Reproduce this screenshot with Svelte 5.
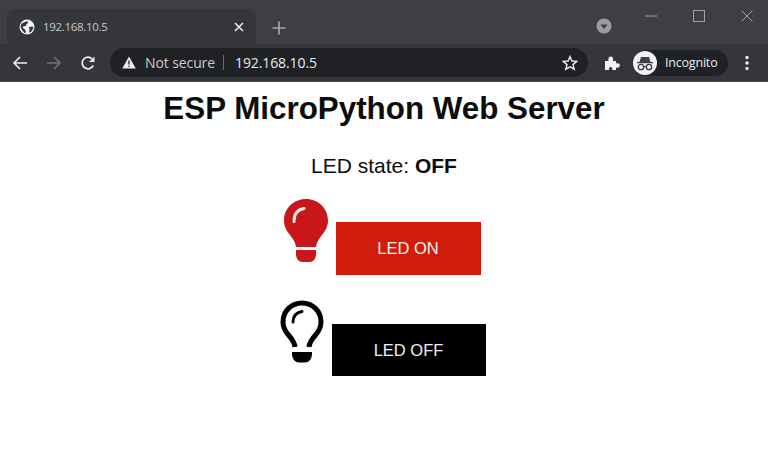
<script>
  const buttons = [
    { label: 'LED ON', cls: 'on' },
    { label: 'LED OFF', cls: 'off' }
  ];
</script>

<div class="page">
  <header class="chrome">
    <div class="tabstrip">
      <div class="tab">
        <svg class="globe" viewBox="0 0 16 16" width="16" height="16">
          <circle cx="8" cy="8" r="7.5" fill="#f1f3f4" />
          <path d="M2.5 4.5 L6 3 L8.5 2 L9 4 L7 5.5 L7.5 7 L5 7 L3.5 8.5 L6 10.5 L7 13.5 L5.5 14 L3 11 L1.5 8 Z M10 8 L13.5 7.5 L14.5 9 L12 13 L10 13.5 L10.5 11 Z" fill="#35363a" />
        </svg>
        <span class="tabtitle">192.168.10.5</span>
        <svg class="tabx" viewBox="0 0 10 10" width="10" height="10">
          <path d="M1 1 L9 9 M9 1 L1 9" stroke="#e8eaed" stroke-width="1.6" />
        </svg>
      </div>
      <svg class="plus" viewBox="0 0 14 14" width="14" height="14">
        <path d="M7 0.5 V13.5 M0.5 7 H13.5" stroke="#a5a7aa" stroke-width="1.7" />
      </svg>
      <svg class="tabsearch" viewBox="0 0 16 16" width="16" height="16">
        <circle cx="8" cy="8" r="7.5" fill="#9a9c9f" />
        <path d="M4.5 6.5 H11.5 L8 11 Z" fill="#3c3e41" />
      </svg>
      <div class="winctl">
        <svg viewBox="0 0 12 12" width="12" height="12"><path d="M0 6 H12" stroke="#9fa1a3" /></svg>
        <svg viewBox="0 0 12 12" width="12" height="12"><rect x="0.5" y="0.5" width="11" height="11" fill="none" stroke="#9fa1a3" /></svg>
        <svg viewBox="0 0 12 12" width="12" height="12"><path d="M0.5 0.5 L11.5 11.5 M11.5 0.5 L0.5 11.5" stroke="#9fa1a3" /></svg>
      </div>
    </div>
    <div class="toolbar">
      <svg class="nav" viewBox="0 0 16 16" width="16" height="16"><path d="M15 8 H2 M8 2 L2 8 L8 14" fill="none" stroke="#e8eaed" stroke-width="1.7" /></svg>
      <svg class="nav" viewBox="0 0 16 16" width="16" height="16"><path d="M1 8 H14 M8 2 L14 8 L8 14" fill="none" stroke="#6f7174" stroke-width="1.7" /></svg>
      <svg class="nav" viewBox="0 0 16 16" width="16" height="16"><path d="M13.2 10.5 A5.8 5.8 0 1 1 12.2 4" fill="none" stroke="#e8eaed" stroke-width="1.8" /><path d="M14.5 1.5 V7 H9 Z" fill="#e8eaed" /></svg>
      <div class="omnibox">
        <svg viewBox="0 0 14 13" width="14" height="13"><path d="M7 0.5 L13.8 12.5 H0.2 Z" fill="#e8eaed" /><path d="M7 4.5 V8.500 M7 9.700 V11" stroke="#202124" stroke-width="1.3" /></svg>
        <span class="notsecure">Not secure</span>
        <span class="sep"></span>
        <span class="url">192.168.10.5</span>
        <svg class="star" viewBox="0 0 16 16" width="16" height="16"><path d="M8 1.6 L9.9 6 L14.7 6.4 L11 9.6 L12.2 14.2 L8 11.8 L3.8 14.2 L5 9.6 L1.3 6.4 L6.1 6 Z" fill="none" stroke="#e8eaed" stroke-width="1.4" /></svg>
      </div>
      <svg class="ext" viewBox="0 0 16 16" width="16" height="16"><path d="M1 6 H4.5 C4 3 5 1.5 6.8 1.5 C8.6 1.5 9.5 3 9 6 H12 V8.5 C14.8 8 15.8 9 15.8 10.5 C15.8 12 14.8 13 12 12.5 V15 H8.2 C8.6 13 8 12 6.7 12 C5.4 12 4.8 13 5.2 15 H1 Z" fill="#f1f3f4" /></svg>
      <div class="incog">
        <span class="avatar">
          <svg viewBox="0 0 24 24" width="24" height="24">
            <circle cx="12" cy="12" r="12" fill="#f1f3f4" />
            <path d="M8 6 H16 L17.5 11 H20 V12.3 H4 V11 H6.5 Z" fill="#3c4043" />
            <circle cx="8" cy="16" r="2.7" fill="none" stroke="#3c4043" stroke-width="1.3" />
            <circle cx="16" cy="16" r="2.7" fill="none" stroke="#3c4043" stroke-width="1.3" />
            <path d="M10.7 15.5 H13.3" stroke="#3c4043" stroke-width="1.2" />
          </svg>
        </span>
        <span class="incogtext">Incognito</span>
      </div>
      <svg class="menu" viewBox="0 0 4 16" width="4" height="16"><circle cx="2" cy="2.5" r="1.7" fill="#f1f3f4" /><circle cx="2" cy="8" r="1.7" fill="#f1f3f4" /><circle cx="2" cy="13.5" r="1.7" fill="#f1f3f4" /></svg>
    </div>
  </header>

  <main class="content">
    <h1>ESP MicroPython Web Server</h1>
    <p class="state">LED state: <strong>OFF</strong></p>
    {#each buttons as b}
      <div class="row {b.cls}">
        {#if b.cls === 'on'}
          <svg class="bulb" viewBox="0 0 44 64" width="44" height="64">
            <path d="M22 0 C9.500 0 0 9.500 0 21.500 C0 29 4 33.500 7.500 38 C10 41.500 11.500 44 12 48 H32 C32.500 44 34 41.500 36.500 38 C40 33.500 44 29 44 21.500 C44 9.500 34.500 0 22 0 Z" fill="#c8171a" />
            <path d="M10 22.500 C10 15 14 10.500 20 9.500" fill="none" stroke="#fbeaea" stroke-width="3" stroke-linecap="round" />
            <path d="M12 51 H32 V55 C32 60 29 63 25.500 63 H18.500 C15 63 12 60 12 55 Z" fill="#c8171a" />
          </svg>
        {:else}
          <svg class="bulb" viewBox="0 0 46 64" width="46" height="64">
            <path d="M16 48 C15.500 43 13 40 9.500 36 C6 32 4 28 4 23 C4 12 12.500 4 23 4 C33.500 4 42 12 42 23 C42 28 40 32 36.500 36 C33 40 30.500 43 30 48" fill="none" stroke="#000" stroke-width="5" />
            <path d="M14 23 C14 17 17.500 13.500 23 12.500" fill="none" stroke="#000" stroke-width="3" stroke-linecap="round" />
            <path d="M13 53 H33 V55 C33 60 29.500 63.500 26 63.500 H20 C16.500 63.500 13 60 13 55 Z" fill="#000" />
          </svg>
        {/if}
        <button class="btn {b.cls}">{b.label}</button>
      </div>
    {/each}
  </main>
</div>

<style>
  :global(body) {
    margin: 0;
    background: #fff;
  }
  .page {
    width: 768px;
    height: 456px;
    overflow: hidden;
    font-family: "Liberation Sans", Arial, sans-serif;
  }
  .chrome {
    height: 82px;
    display: flex;
    flex-direction: column;
    font-family: "Open Sans", "Noto Sans", sans-serif;
  }
  .tabstrip {
    height: 44px;
    background: #3d3f42;
    display: flex;
    align-items: flex-end;
    box-sizing: border-box;
    padding-left: 7px;
    position: relative;
  }
  .tab {
    width: 249px;
    height: 35px;
    box-sizing: border-box;
    background: #35363a;
    border-radius: 8px 8px 0 0;
    display: flex;
    align-items: center;
    padding: 0 12px;
  }
  .globe {
    flex: none;
  }
  .tabtitle {
    margin-left: 8px;
    font-size: 11.5px;
    letter-spacing: -0.3px;
    color: #c5c7c9;
    flex: 1;
  }
  .plus {
    margin: 0 0 9px 16px;
  }
  .tabsearch {
    margin: 0 0 10px 310px;
  }
  .winctl {
    position: absolute;
    top: 10px;
    right: 15px;
    display: flex;
    gap: 36px;
  }
  .toolbar {
    height: 38px;
    background: #35363a;
    display: flex;
    align-items: center;
    padding-left: 12px;
    box-sizing: border-box;
    border-bottom: 1px solid #4a4b4e;
  }
  .nav {
    margin-right: 18px;
    flex: none;
  }
  .omnibox {
    margin-left: -4px;
    width: 478px;
    height: 29px;
    box-sizing: border-box;
    background: #202124;
    border-radius: 15px;
    display: flex;
    align-items: center;
    padding: 0 10px 0 12px;
  }
  .notsecure {
    margin-left: 9px;
    font-size: 14px;
    letter-spacing: -0.1px;
    color: #c9cbcd;
  }
  .sep {
    width: 1px;
    height: 15px;
    background: #6a6c6f;
    margin: 0 11px 0 8px;
  }
  .url {
    font-size: 14px;
    letter-spacing: -0.1px;
    color: #e8eaed;
    flex: 1;
  }
  .ext {
    margin-left: 16px;
    flex: none;
  }
  .incog {
    margin-left: 13px;
    width: 95px;
    height: 26px;
    box-sizing: border-box;
    background: #202124;
    border-radius: 13px;
    display: flex;
    align-items: center;
  }
  .avatar {
    display: flex;
  }
  .incogtext {
    margin-left: 8px;
    font-size: 12.5px;
    letter-spacing: -0.2px;
    color: #e8eaed;
  }
  .menu {
    margin-left: 17px;
  }
  .content {
    display: flex;
    flex-direction: column;
    align-items: center;
    color: #0c0c0c;
  }
  h1 {
    margin: 9px 0 0;
    font-size: 31.35px;
    line-height: 36px;
    font-weight: 700;
  }
  .state {
    margin: 27px 0 0;
    font-size: 21px;
    line-height: 24px;
  }
  .row {
    display: flex;
    align-items: flex-end;
    margin-right: 4px;
  }
  .row.on {
    margin-top: 21px;
    gap: 8px;
  }
  .row.off {
    margin-top: 24px;
    gap: 7px;
  }
  .row.off .bulb {
    margin-bottom: 13px;
  }
  .row.on .bulb {
    margin-bottom: 12px;
  }
  .btn {
    border: 0;
    padding: 0;
    height: 53px;
    color: #f1f1f1;
    font-family: "Liberation Sans", Arial, sans-serif;
    font-size: 16.500px;
  }
  .btn.off {
    height: 52px;
  }
  .btn.on {
    width: 145px;
    background: #d01d0b;
  }
  .btn.off {
    width: 154px;
    background: #000;
  }
</style>
